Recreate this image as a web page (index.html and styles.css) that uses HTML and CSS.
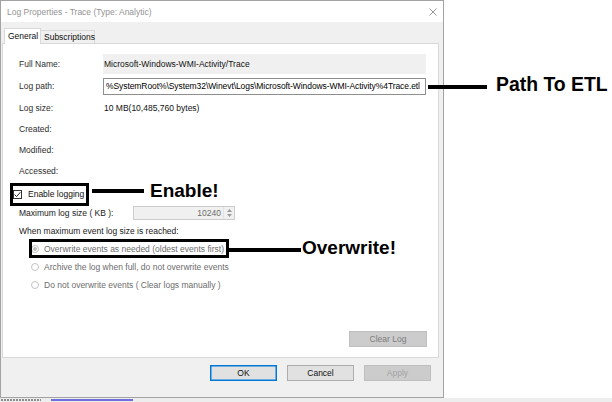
FILE: index.html
```html
<!DOCTYPE html>
<html>
<head>
<meta charset="utf-8">
<title>Log Properties</title>
<link rel="stylesheet" href="styles.css">
</head>
<body>
<div class="screen">
  <div class="dialog">
    <div class="titlebar">
      <span class="title">Log Properties - Trace (Type: Analytic)</span>
      <svg class="close" width="8" height="8" viewBox="0 0 8 8"><path d="M0.5 0.5L7.5 7.5M7.5 0.5L0.5 7.5" stroke="#8a8a8a" stroke-width="0.9" fill="none"/></svg>
    </div>
    <div class="content">
      <div class="tabs">
        <div class="tab active">General</div>
        <div class="tab">Subscriptions</div>
      </div>
      <div class="panel">
        <div class="fields">
          <div class="label">Full Name:</div>
          <div class="value ro">Microsoft-Windows-WMI-Activity/Trace</div>
          <div class="label">Log path:</div>
          <div class="value"><div class="textbox">%SystemRoot%\System32\Winevt\Logs\Microsoft-Windows-WMI-Activity%4Trace.etl</div></div>
          <div class="label">Log size:</div>
          <div class="value plain">10 MB(10,485,760 bytes)</div>
          <div class="label">Created:</div>
          <div class="value plain"></div>
          <div class="label">Modified:</div>
          <div class="value plain"></div>
          <div class="label">Accessed:</div>
          <div class="value plain"></div>
        </div>
        <div class="check-row">
          <span class="checkbox"><svg width="7" height="7" viewBox="0 0 7 7"><path d="M0.6 3.6L2.6 5.6L6.4 1.2" stroke="#222" stroke-width="1" fill="none"/></svg></span>
          <span>Enable logging</span>
        </div>
        <div class="size-row">
          <span class="size-label">Maximum log size ( KB ):</span>
          <div class="spin">
            <span class="spin-val">10240</span>
            <span class="spin-btns">
              <svg width="5" height="3" viewBox="0 0 5 3"><path d="M0 3L2.5 0L5 3Z" fill="#9a9a9a"/></svg>
              <svg width="5" height="3" viewBox="0 0 5 3"><path d="M0 0L2.5 3L5 0Z" fill="#9a9a9a"/></svg>
            </span>
          </div>
        </div>
        <div class="when">When maximum event log size is reached:</div>
        <div class="radios">
          <div class="radio-row"><span class="radio on"></span><span>Overwrite events as needed (oldest events first)</span></div>
          <div class="radio-row"><span class="radio"></span><span>Archive the log when full, do not overwrite events</span></div>
          <div class="radio-row"><span class="radio"></span><span>Do not overwrite events ( Clear logs manually )</span></div>
        </div>
        <div class="panel-foot">
          <div class="btn disabled clear">Clear Log</div>
        </div>
      </div>
      <div class="buttons">
        <div class="btn default">OK</div>
        <div class="btn">Cancel</div>
        <div class="btn disabled">Apply</div>
      </div>
    </div>
  </div>
  <div class="under">
    <span class="frag gray"></span>
    <span class="frag blue"></span>
  </div>

  <div class="anno-box box-enable"></div>
  <div class="anno-box box-overwrite"></div>
  <div class="anno-line line-path"></div>
  <div class="anno-line line-enable"></div>
  <div class="anno-line line-overwrite"></div>
  <div class="anno-text text-path">Path To ETL</div>
  <div class="anno-text text-enable">Enable!</div>
  <div class="anno-text text-overwrite">Overwrite!</div>
</div>
</body>
</html>
```

FILE: styles.css
```css
* { box-sizing: border-box; }
html, body { margin: 0; padding: 0; }
body {
  width: 612px;
  height: 402px;
  overflow: hidden;
  background: #ffffff;
  font-family: "Liberation Sans", Arial, sans-serif;
  font-size: 8.5px;
  color: #1a1a1a;
}
.screen { position: relative; width: 612px; height: 402px; }

.dialog {
  width: 444px;
  height: 398px;
  border: 1px solid #a3a3a3;
  background: #f0f0f0;
  display: flex;
  flex-direction: column;
}
.titlebar {
  height: 21px;
  flex: none;
  background: #ffffff;
  display: flex;
  align-items: center;
  justify-content: space-between;
  padding: 0 6px 0 6px;
  color: #939393;
}
.close { display: block; }

.content {
  flex: 1;
  display: flex;
  flex-direction: column;
  padding: 6px 4px 0 1px;
}
.tabs {
  height: 15px;
  display: flex;
  align-items: flex-end;
  padding-left: 2px;
  position: relative;
  z-index: 1;
}
.tab {
  height: 13px;
  border: 1px solid #d9d9d9;
  border-bottom: none;
  background: #f0f0f0;
  display: flex;
  align-items: center;
  padding: 0 3px 0 3px;
  color: #111;
}
.tab.active {
  height: 16px;
  margin-bottom: -1px;
  background: #ffffff;
  width: 37px;
  padding-left: 3px;
  padding-bottom: 1px;
}
.tab + .tab { border-left: none; width: 54px; }

.panel {
  height: 315px;
  flex: none;
  background: #ffffff;
  border: 1px solid #d9d9d9;
  display: flex;
  flex-direction: column;
  padding: 9px 11px 10px 16px;
}

.fields {
  display: grid;
  grid-template-columns: 84px 1fr;
  grid-template-rows: 21px 23px 21px 21px 21px 21px;
  align-items: center;
  padding-right: 1px;
}
.label { color: #2e2e2e; }
.value { height: 100%; display: flex; align-items: center; }
.value.plain { padding-left: 1px; color: #111; }
.value.ro {
  height: 20px;
  margin-top: 1px;
  background: #f0f0f0;
  padding-left: 1px;
  color: #111;
}
.textbox {
  width: 100%;
  height: 17px;
  margin-top: 1px;
  border: 1px solid #8e8e8e;
  background: #fff;
  padding-left: 2px;
  display: flex;
  align-items: center;
  white-space: nowrap;
  overflow: hidden;
  color: #000;
  letter-spacing: -0.08px;
}

.check-row {
  height: 22px;
  margin-top: 2px;
  margin-left: -6px;
  display: flex;
  align-items: center;
  gap: 6px;
  color: #111;
}
.checkbox {
  width: 9px;
  height: 9px;
  border: 1px solid #333;
  display: flex;
  align-items: center;
  justify-content: center;
  background: #fff;
}
.checkbox svg { display: block; }

.size-row {
  height: 16px;
  display: flex;
  align-items: center;
}
.size-label { width: 114px; color: #1a1a1a; }
.spin {
  width: 102px;
  height: 14px;
  border: 1px solid #cccccc;
  background: #f0f0f0;
  display: flex;
  align-items: center;
  justify-content: flex-end;
  color: #6d6d6d;
}
.spin-val { padding-right: 2px; }
.spin-btns {
  width: 11px;
  height: 100%;
  display: flex;
  flex-direction: column;
  align-items: center;
  justify-content: center;
  gap: 2px;
  border-left: 1px solid #e2e2e2;
}
.spin-btns svg { display: block; }

.when {
  height: 18px;
  margin-top: 1px;
  display: flex;
  align-items: center;
  color: #1a1a1a;
}
.radios { display: flex; flex-direction: column; }
.radio-row {
  height: 18px;
  display: flex;
  align-items: center;
  gap: 5px;
  padding-left: 12px;
  color: #6d6d6d;
}
.radio {
  width: 8px;
  height: 8px;
  border: 1px solid #c2c2c2;
  border-radius: 50%;
  background: #fff;
  display: flex;
  align-items: center;
  justify-content: center;
}
.radio.on::after {
  content: "";
  width: 4px;
  height: 4px;
  border-radius: 50%;
  background: #bdbdbd;
}

.panel-foot {
  margin-top: auto;
  display: flex;
  justify-content: flex-end;
}

.btn {
  width: 67px;
  height: 16px;
  border: 1px solid #adadad;
  background: #e1e1e1;
  display: flex;
  align-items: center;
  justify-content: center;
  color: #111;
}
.btn.default { border-color: #0078d7; box-shadow: inset 0 0 0 0.5px #0078d7; }
.btn.disabled { background: #cccccc; border-color: #bfbfbf; color: #a3a3a3; }
.btn.clear { width: 78px; color: #7d7d7d; }

.buttons {
  flex: 1;
  display: flex;
  justify-content: flex-end;
  align-items: flex-start;
  gap: 10px;
  padding-top: 7px;
  padding-right: 8px;
}

.under {
  height: 4px;
  background: #ededed;
  display: flex;
  align-items: center;
  gap: 10px;
  padding-left: 1px;
}
.frag { height: 2px; display: block; }
.frag.gray { width: 40px; background: repeating-linear-gradient(90deg, #8c8c8c 0 2px, transparent 2px 3px); }
.frag.blue { width: 82px; background: #6e6ee0; }

.anno-box { position: absolute; border: 3px solid #000; }
.box-enable { left: 10px; top: 183px; width: 79px; height: 23px; }
.box-overwrite { left: 29px; top: 239px; width: 200px; height: 19px; }

.anno-line { position: absolute; height: 4px; background: #000; }
.line-path { left: 428px; top: 85px; width: 59px; }
.line-enable { left: 92px; top: 189px; width: 52px; }
.line-overwrite { left: 229px; top: 248px; width: 72px; }

.anno-text {
  position: absolute;
  font-family: "Liberation Sans", Arial, sans-serif;
  font-weight: bold;
  font-size: 19px;
  line-height: 19px;
  color: #000;
  white-space: nowrap;
}
.text-path { left: 496px; top: 75px; font-size: 19.4px; }
.text-enable { left: 150px; top: 181px; }
.text-overwrite { left: 302px; top: 238px; }
```
